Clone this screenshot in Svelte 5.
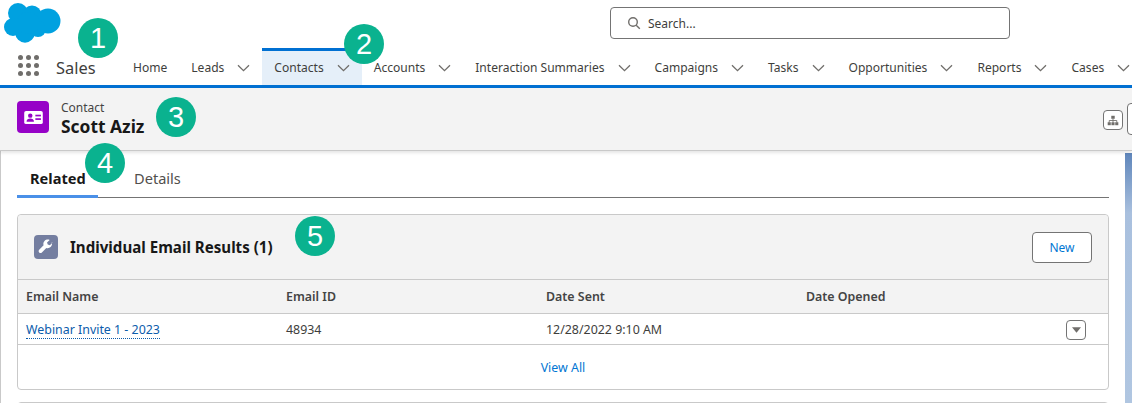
<script>
  const navItems = [
    { label: 'Leads' },
    { label: 'Contacts', active: true },
    { label: 'Accounts' },
    { label: 'Interaction Summaries' },
    { label: 'Campaigns' },
    { label: 'Tasks' },
    { label: 'Opportunities' },
    { label: 'Reports' },
    { label: 'Cases' }
  ];

  const columns = ['Email Name', 'Email ID', 'Date Sent', 'Date Opened'];

  const callouts = [
    { n: 1, x: 98, y: 38 },
    { n: 2, x: 364, y: 44 },
    { n: 3, x: 176, y: 117 },
    { n: 4, x: 105, y: 163 },
    { n: 5, x: 315, y: 236 }
  ];
</script>

<div class="page">
  <header class="top">
    <svg class="logo" viewBox="0 0 64 44" aria-hidden="true">
      <circle cx="18" cy="13" r="10" />
      <circle cx="32" cy="15" r="9.5" />
      <circle cx="48" cy="21" r="12.5" />
      <circle cx="13" cy="27" r="9" />
      <circle cx="25" cy="33" r="9.7" />
      <circle cx="38" cy="29" r="8" />
      <circle cx="28" cy="23" r="11" />
    </svg>
    <div class="search">
      <svg viewBox="0 0 14 14" aria-hidden="true">
        <circle cx="6" cy="6" r="4.3" />
        <path d="M9.2 9.2l3.6 3.6" />
      </svg>
      <span>Search...</span>
    </div>
  </header>

  <nav class="nav">
    <div class="launcher" aria-hidden="true">
      {#each Array(9) as _}<i></i>{/each}
    </div>
    <span class="app-name">Sales</span>
    <ul>
      <li class="item home">Home</li>
      {#each navItems as item}
        <li class="item" class:active={item.active}>
          {item.label}
          <svg class="chev" viewBox="0 0 13 8" aria-hidden="true"><path d="M1 1.2l5.5 5.5L12 1.2" /></svg>
        </li>
      {/each}
    </ul>
  </nav>

  <section class="highlights">
    <div class="record-icon">
      <svg viewBox="0 0 20 14" aria-hidden="true">
        <rect width="20" height="14" rx="2" fill="#fff" />
        <circle cx="6.5" cy="5" r="2.4" fill="#9602c7" />
        <path d="M2.5 11.5c0-2.4 1.8-3.4 4-3.4s4 1 4 3.4z" fill="#9602c7" />
        <rect x="12" y="4" width="6" height="1.8" fill="#9602c7" />
        <rect x="12" y="7.8" width="6" height="1.8" fill="#9602c7" />
      </svg>
    </div>
    <div class="record-name">
      <span>Contact</span>
      <strong>Scott Aziz</strong>
    </div>
    <div class="actions">
      <button class="hier" aria-label="View hierarchy">
        <svg viewBox="0 0 14 12" aria-hidden="true">
          <rect x="5" y="0.5" width="4" height="3.5" />
          <rect x="0.8" y="8" width="3.6" height="3.5" />
          <rect x="5.2" y="8" width="3.6" height="3.5" />
          <rect x="9.6" y="8" width="3.6" height="3.5" />
          <path d="M7 4v4M2.6 8V6h8.8v2" fill="none" stroke="#706e6b" />
        </svg>
      </button>
      <span class="cut-button"></span>
    </div>
  </section>

  <div class="body">
    <main class="content">
      <div class="tabs">
        <span class="tab current">Related</span>
        <span class="tab">Details</span>
      </div>

      <section class="card">
        <div class="card-head">
          <div class="wrench">
            <svg viewBox="0 0 24 24" aria-hidden="true">
              <path d="M20.6 6.2l-3.5 3.5-2.8-.9-.9-2.8 3.5-3.5c-2.5-.9-5.3-.3-6.9 1.5-1.5 1.6-1.9 3.8-1.2 5.7l-5.9 5.9c-1 1-1 2.6 0 3.6s2.6 1 3.6 0l5.9-5.9c1.9.7 4.1.3 5.7-1.2 1.8-1.7 2.4-4.4 1.5-6.9z" />
            </svg>
          </div>
          <h2>Individual Email Results (1)</h2>
          <button class="new">New</button>
        </div>

        <div class="row labels">
          {#each columns as col}<span>{col}</span>{/each}
        </div>
        <div class="row data">
          <span><a href="#top">Webinar Invite 1 - 2023</a></span>
          <span>48934</span>
          <span>12/28/2022 9:10 AM</span>
          <span></span>
          <button class="row-menu" aria-label="Show actions">
            <svg viewBox="0 0 10 6" aria-hidden="true"><path d="M0 0h10L5 6z" /></svg>
          </button>
        </div>
        <div class="card-foot"><a href="#top">View All</a></div>
      </section>

      <div class="next-card"></div>
    </main>
    <div class="backdrop"></div>
  </div>

  {#each callouts as c}
    <span class="callout" style="left: {c.x}px; top: {c.y}px">{c.n}</span>
  {/each}
</div>

<style>
  :global(body) {
    margin: 0;
    background: #fff;
  }

  .page {
    position: relative;
    width: 1132px;
    height: 403px;
    overflow: hidden;
    font-family: "Noto Sans", "Open Sans", sans-serif;
    font-size: 12px;
    color: #3e3e3c;
  }

  .top {
    height: 48px;
    position: relative;
    display: flex;
    padding-left: 610px;
    box-sizing: border-box;
    padding-top: 7px;
  }

  .logo {
    position: absolute;
    left: 0;
    top: 0;
    width: 64px;
    height: 44px;
    fill: #00a1e0;
  }

  .search {
    width: 400px;
    height: 32px;
    box-sizing: border-box;
    border: 1px solid #747474;
    border-radius: 4px;
    display: flex;
    align-items: center;
    gap: 7px;
    padding-left: 16px;
    color: #3e3e3c;
    font-size: 12px;
  }

  .search svg {
    width: 14px;
    height: 14px;
    fill: none;
    stroke: #706e6b;
    stroke-width: 1.4;
  }

  .nav {
    height: 40px;
    box-sizing: border-box;
    border-bottom: 3px solid #0070d2;
    display: flex;
    align-items: stretch;
    padding-left: 18px;
  }

  .launcher {
    flex-shrink: 0;
    width: 21px;
    height: 21px;
    margin-top: 7px;
    display: grid;
    grid-template-columns: repeat(3, 5px);
    gap: 3px;
  }

  .launcher i {
    width: 5px;
    height: 5px;
    border-radius: 50%;
    background: #706e6b;
  }

  .app-name {
    flex-shrink: 0;
    margin-left: 17px;
    width: 65px;
    font-size: 16.4px;
    line-height: 39px;
    color: #3e3e3c;
  }

  ul {
    flex-shrink: 0;
    display: flex;
    margin: 0;
    padding: 0;
    list-style: none;
    font-size: 12.05px;
  }

  .item {
    display: flex;
    align-items: center;
    gap: 13px;
    padding: 0 12px 1px;
    white-space: nowrap;
    border-top: 3px solid transparent;
  }

  .item.active {
    background: #e5eff9;
    border-top-color: #0070d2;
  }

  .chev {
    width: 13px;
    height: 8px;
    fill: none;
    stroke: #706e6b;
    stroke-width: 1.3;
  }

  .highlights {
    height: 63px;
    box-sizing: border-box;
    background: #f3f3f3;
    border-bottom: 1px solid #c9c9c9;
    box-shadow: 0 2px 3px rgba(0, 0, 0, 0.1);
    display: flex;
    align-items: flex-start;
    padding: 13px 0 0 17px;
    position: relative;
  }

  .record-icon {
    width: 32px;
    height: 32px;
    border-radius: 4px;
    background: #9602c7;
    display: flex;
    align-items: center;
    justify-content: center;
  }

  .record-icon svg {
    width: 19px;
    height: 13px;
  }

  .record-name {
    margin-left: 12px;
    display: flex;
    flex-direction: column;
  }

  .record-name span {
    font-size: 12px;
    line-height: 14px;
    color: #444;
  }

  .record-name strong {
    font-size: 17.4px;
    line-height: 22px;
    color: #181818;
  }

  .actions {
    margin-left: auto;
    display: flex;
    align-items: flex-start;
    gap: 4px;
    margin-right: -10px;
    margin-top: 2px;
  }

  .hier {
    margin-top: 7px;
    width: 20px;
    height: 20px;
    padding: 0;
    background: #fff;
    border: 1px solid #747474;
    border-radius: 4px;
    display: flex;
    align-items: center;
    justify-content: center;
  }

  .hier svg {
    width: 12px;
    height: 11px;
    fill: #706e6b;
  }

  .cut-button {
    width: 15px;
    height: 32px;
    box-sizing: border-box;
    background: #fff;
    border: 1px solid #747474;
    border-radius: 4px;
  }

  .body {
    display: flex;
    height: 252px;
  }

  .content {
    width: 1125px;
    box-sizing: border-box;
    background: #fff;
    border-left: 1px solid #c9c9c9;
    padding: 0 16px;
  }

  .backdrop {
    flex: 1;
    background: linear-gradient(#5f86bb 0, #a9c0de 60px, #b0c6e1 100%);
    margin-top: 2px;
  }

  .tabs {
    height: 47px;
    display: flex;
    align-items: stretch;
    box-sizing: border-box;
    border-bottom: 1px solid #747474;
    margin-bottom: 16px;
    font-size: 14.6px;
  }

  .tab {
    padding: 17px 12px 0;
    color: #514f4d;
    margin-left: 24px;
  }

  .tab.current {
    margin-left: 0;
    width: 81px;
    padding-left: 13px;
    padding-right: 0;
    box-sizing: border-box;
    font-weight: 700;
    color: #181818;
    border-bottom: 3px solid #4a90e8;
    margin-bottom: -1px;
  }

  .card {
    height: 176px;
    box-sizing: border-box;
    border: 1px solid #c9c9c9;
    border-radius: 4px;
  }

  .card-head {
    height: 64px;
    background: #f3f3f3;
    border-radius: 4px 4px 0 0;
    display: flex;
    align-items: center;
    padding: 0 16px;
  }

  .wrench {
    width: 24px;
    height: 24px;
    border-radius: 4px;
    background: #747ea0;
    display: flex;
    align-items: center;
    justify-content: center;
  }

  .wrench svg {
    width: 18px;
    height: 18px;
    fill: #fff;
  }

  h2 {
    margin: 0 0 0 12px;
    font-size: 15.1px;
    font-weight: 700;
    color: #181818;
  }

  .new {
    margin-left: auto;
    width: 60px;
    height: 31px;
    padding: 0;
    background: #fff;
    border: 1px solid #747474;
    border-radius: 4px;
    color: #0176d3;
    font: inherit;
  }

  .row {
    display: grid;
    grid-template-columns: repeat(4, 260px);
    align-items: center;
    padding-left: 8px;
    position: relative;
    box-sizing: border-box;
    border-top: 1px solid #c9c9c9;
    font-size: 12.4px;
  }

  .labels {
    height: 34px;
    background: #f3f3f3;
    font-weight: 600;
    color: #444;
  }

  .data {
    height: 31px;
  }

  a {
    color: #0b5cab;
    text-decoration: none;
  }

  .data a {
    border-bottom: 1px dotted #0b5cab;
  }

  .row-menu {
    position: absolute;
    right: 22px;
    top: 6px;
    width: 20px;
    height: 20px;
    padding: 0;
    background: #fff;
    border: 1px solid #747474;
    border-radius: 4px;
    display: flex;
    align-items: center;
    justify-content: center;
  }

  .row-menu svg {
    width: 9px;
    height: 6px;
    fill: #706e6b;
  }

  .card-foot {
    height: 45px;
    box-sizing: border-box;
    border-top: 1px solid #c9c9c9;
    display: flex;
    align-items: center;
    justify-content: center;
    font-size: 12.4px;
  }

  .card-foot a {
    color: #0176d3;
  }

  .next-card {
    margin-top: 12px;
    height: 20px;
    border: 1px solid #c9c9c9;
    border-radius: 4px;
  }

  .callout {
    position: absolute;
    width: 40px;
    height: 40px;
    margin: -20px 0 0 -20px;
    border-radius: 50%;
    background: #0ab28f;
    color: #fff;
    font-family: "Liberation Sans", sans-serif;
    font-size: 29px;
    line-height: 40px;
    text-align: center;
  }
</style>
